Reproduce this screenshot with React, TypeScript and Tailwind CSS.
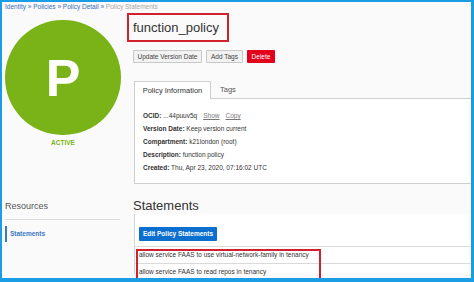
import React from 'react';

const font = { fontFamily: '"Liberation Sans", Arial, sans-serif' };

const infoRows: { label: string; value: React.ReactNode }[] = [
    {
        label: 'OCID:',
        value: (
            <>
                ...44puuv5q
                <span className="ml-[6px] underline text-[#777]">Show</span>
                <span className="ml-[6px] underline text-[#777]">Copy</span>
            </>
        ),
    },
    { label: 'Version Date:', value: 'Keep version current' },
    { label: 'Compartment:', value: 'k21london (root)' },
    { label: 'Description:', value: 'function policy' },
    { label: 'Created:', value: 'Thu, Apr 23, 2020, 07:16:02 UTC' },
];

const statements = [
    'allow service FAAS to use virtual-network-family in tenancy',
    'allow service FAAS to read repos in tenancy',
];

export default function App() {
    return (
        <div
            style={font}
            className="w-[474px] h-[282px] overflow-hidden bg-[#fafafa] border-t-2 border-l-2 border-r-[3px] border-b-4 border-[#1b9de6] text-[#333]"
        >
            {/* Breadcrumb */}
            <div className="h-[10px] pl-[3px] text-[6.5px] leading-[9px] whitespace-nowrap">
                <span className="text-[#2f6fbf]">Identity</span>
                <span className="text-[#2f6fbf]"> » </span>
                <span className="text-[#2f6fbf]">Policies</span>
                <span className="text-[#2f6fbf]"> » </span>
                <span className="text-[#2f6fbf]">Policy Detail</span>
                <span className="text-[#2f6fbf]"> » </span>
                <span className="text-[#a8a8a8]">Policy Statements</span>
            </div>

            {/* Top: avatar + details */}
            <div className="flex h-[178px]">
                <div className="w-[125px] shrink-0 flex flex-col items-center pr-[3px]">
                    <div className="mt-[8px] w-[116px] h-[115px] rounded-full bg-[#7ab317] flex items-center justify-center">
                        <span className="text-white font-bold text-[52px] leading-none">P</span>
                    </div>
                    <div className="mt-[4px] text-[6.5px] font-bold text-[#7ab317] leading-[8px]">ACTIVE</div>
                </div>

                <div className="flex-1 min-w-0 pt-[1px]">
                    <div className="w-[102px] h-[29px] border-2 border-[#d0212e] flex items-center pl-[4px]">
                        <span className="text-[13px] text-[#333]">function_policy</span>
                    </div>

                    <div className="flex gap-[4px] ml-[6px] mt-[8px]">
                        <button className="w-[69px] h-[13px] border border-[#c8c8c8] bg-[#f2f2f2] text-[6.5px] text-[#444] rounded-[1px]">
                            Update Version Date
                        </button>
                        <button className="w-[37px] h-[13px] border border-[#c8c8c8] bg-[#f2f2f2] text-[6.5px] text-[#444] rounded-[1px]">
                            Add Tags
                        </button>
                        <button className="w-[28px] h-[13px] bg-[#e2001a] text-[6.5px] text-white rounded-[1px]">
                            Delete
                        </button>
                    </div>

                    <div className="ml-[7px] mt-[18px]">
                        <div className="flex items-end h-[17px]">
                            <div className="w-[77px] h-[18px] -mb-px border border-b-0 border-[#cfcfcf] bg-white flex items-center justify-center text-[7.5px] text-[#333] relative z-10">
                                Policy Information
                            </div>
                            <div className="ml-[9px] h-[17px] flex items-center text-[7.5px] text-[#555]">Tags</div>
                        </div>
                        <div className="w-[360px] h-[86px] border border-[#cfcfcf] bg-white pt-[10px] pl-[8px]">
                            {infoRows.map((row) => (
                                <div key={row.label} className="text-[6.5px] leading-[13px] text-[#333] whitespace-nowrap">
                                    <span className="font-bold">{row.label}</span> {row.value}
                                </div>
                            ))}
                        </div>
                    </div>
                </div>
            </div>

            {/* Bottom: resources + statements */}
            <div className="flex">
                <div className="w-[125px] shrink-0 pl-[3px]">
                    <div className="mt-[10px] text-[9px] leading-[12px] text-[#555]">Resources</div>
                    <div className="w-[115px] mt-[7px] border-b border-[#dcdcdc]" />
                    <div className="mt-[6px] h-[16px] border-l-2 border-[#3a78c3] pl-[3px] flex items-center">
                        <span className="text-[6.5px] font-bold text-[#3a78c3]">Statements</span>
                    </div>
                </div>

                <div className="flex-1 min-w-0">
                    <div className="ml-[6px] mt-[7px] text-[13px] leading-[17px] text-[#333]">Statements</div>
                    <div className="ml-[7px] border-l border-[#d6d6d6] bg-white h-[60px]">
                        <div className="pt-[5px] pl-[4px]">
                            <button className="w-[78px] h-[14px] bg-[#0b6fd0] text-white text-[6.5px] font-bold rounded-[1px]">
                                Edit Policy Statements
                            </button>
                        </div>
                        <div className="relative mt-[3px]">
                            {statements.map((s) => (
                                <div
                                    key={s}
                                    className="h-[17px] border-t border-[#dadada] pl-[4px] flex items-center text-[6.5px] text-[#333] whitespace-nowrap"
                                >
                                    {s}
                                </div>
                            ))}
                            <div className="absolute left-[1px] top-[3px] w-[185px] h-[31px] border-2 border-[#d0212e]" />
                        </div>
                    </div>
                </div>
            </div>
        </div>
    );
}
